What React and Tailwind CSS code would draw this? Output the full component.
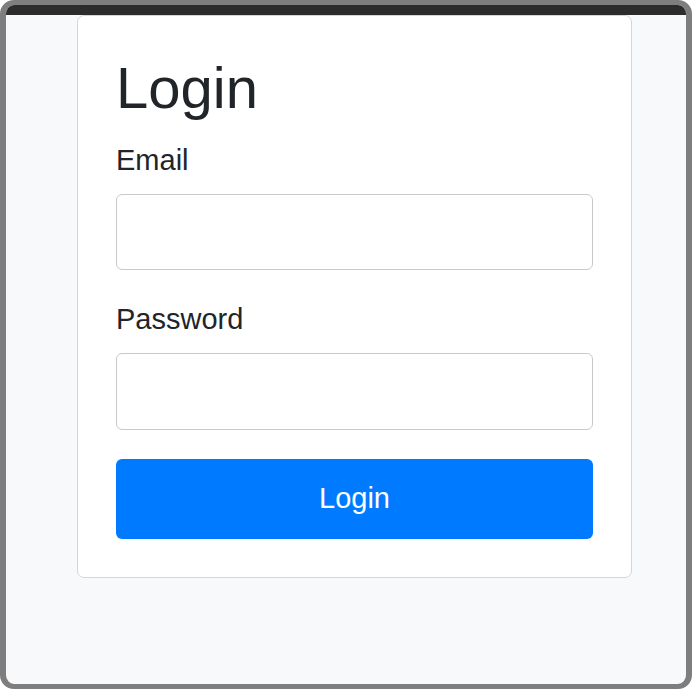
export default function App() {
  return (
    <div className="w-[692px] h-[689px] bg-white">
      <div className="w-full h-full rounded-[14px] border-x-[6px] border-y-[5px] border-[#7e7e7e] overflow-hidden bg-[#f8f9fa] flex flex-col" style={{ fontFamily: '"Liberation Sans", Arial, sans-serif' }}>
        <div className="h-[10px] bg-[#2c2c2c] shrink-0"></div>
        <div className="ml-[71px] w-[555px] bg-white border border-[#d6d6d6] rounded-[7px] p-[38px] text-[#212529]">
          <h2 className="text-[58px] leading-[67px] font-normal m-0">Login</h2>
          <div className="mt-[18px]">
            <label className="block text-[29px] leading-[42px]">Email</label>
            <input type="email" className="mt-[13px] block w-full h-[76px] border border-[#c9c9c9] rounded-[6px] bg-white outline-none" />
          </div>
          <div className="mt-[28px]">
            <label className="block text-[29px] leading-[42px]">Password</label>
            <input type="password" className="mt-[13px] block w-full h-[77px] border border-[#c9c9c9] rounded-[6px] bg-white outline-none" />
          </div>
          <button className="mt-[29px] w-full h-[80px] bg-[#007bff] text-white text-[29px] rounded-[6px] flex items-center justify-center">Login</button>
        </div>
      </div>
    </div>
  );
}
